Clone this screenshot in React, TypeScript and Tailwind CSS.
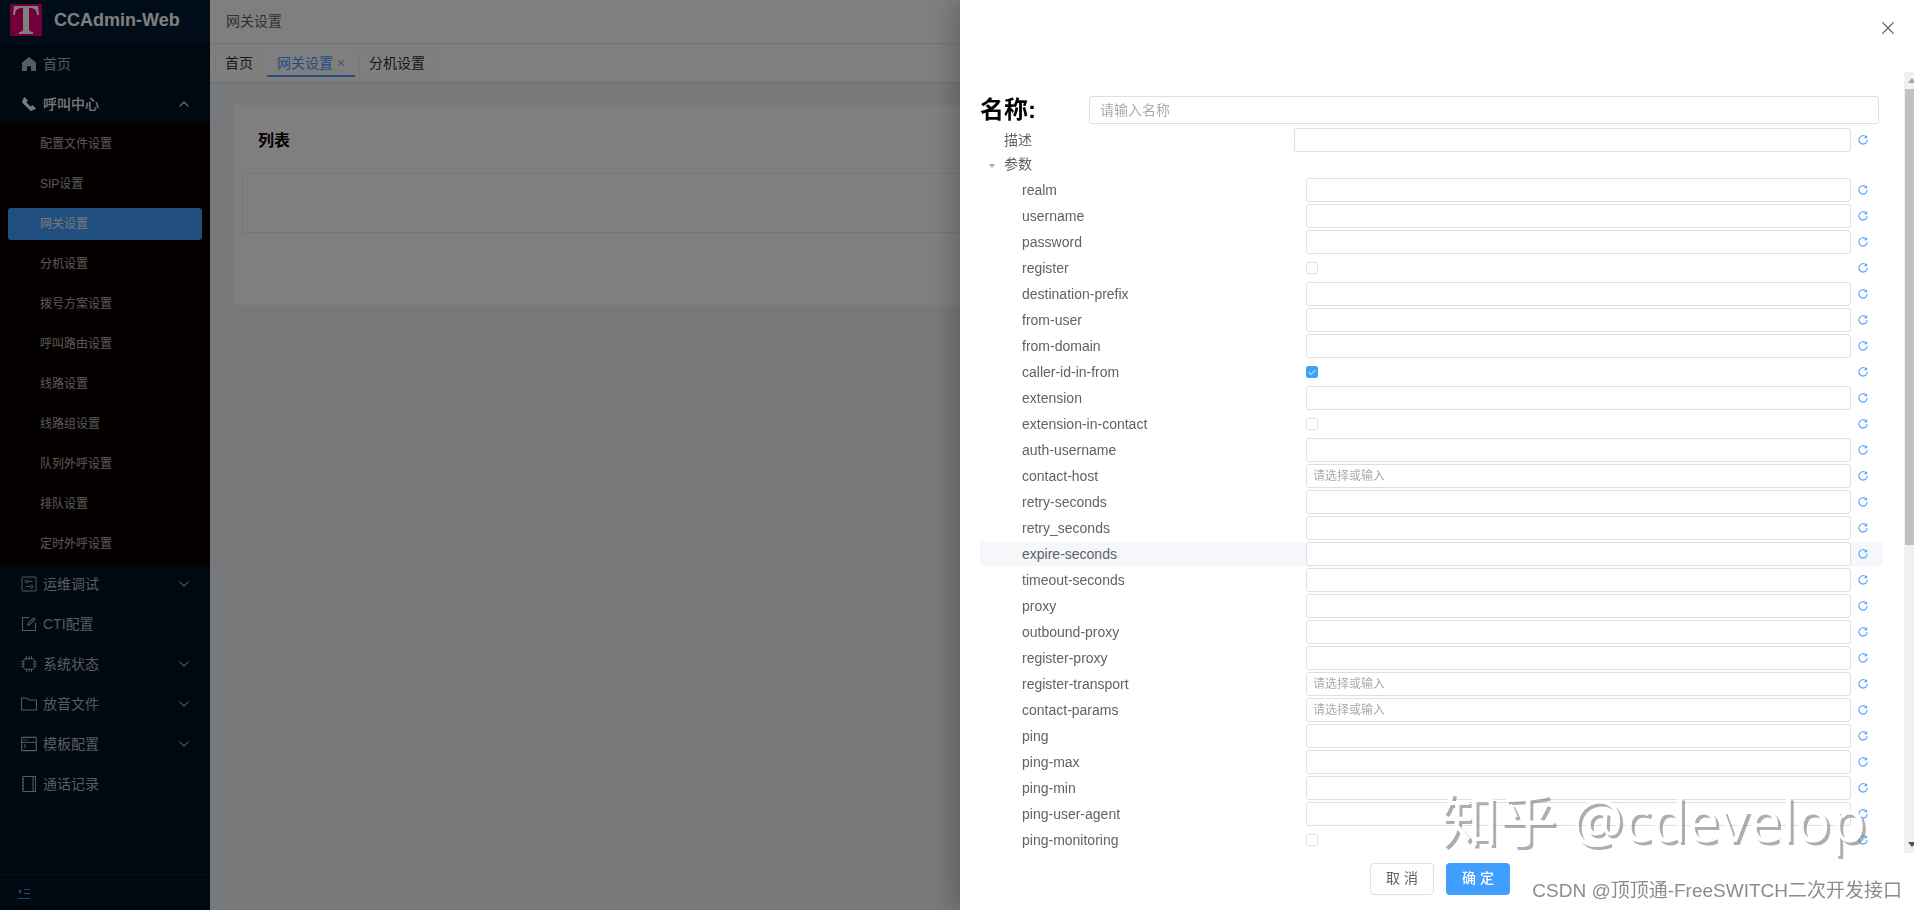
import { useState } from "react";
import type { ReactNode } from "react";
import clsx from "clsx";

type Field = {
  name: string;
  kind?: "text" | "check" | "select";
  checked?: boolean;
};

const SUB_MENU = [
  "配置文件设置",
  "SIP设置",
  "网关设置",
  "分机设置",
  "拨号方案设置",
  "呼叫路由设置",
  "线路设置",
  "线路组设置",
  "队列外呼设置",
  "排队设置",
  "定时外呼设置",
];

const FIELDS: Field[] = [
  { name: "realm" },
  { name: "username" },
  { name: "password" },
  { name: "register", kind: "check" },
  { name: "destination-prefix" },
  { name: "from-user" },
  { name: "from-domain" },
  { name: "caller-id-in-from", kind: "check", checked: true },
  { name: "extension" },
  { name: "extension-in-contact", kind: "check" },
  { name: "auth-username" },
  { name: "contact-host", kind: "select" },
  { name: "retry-seconds" },
  { name: "retry_seconds" },
  { name: "expire-seconds" },
  { name: "timeout-seconds" },
  { name: "proxy" },
  { name: "outbound-proxy" },
  { name: "register-proxy" },
  { name: "register-transport", kind: "select" },
  { name: "contact-params", kind: "select" },
  { name: "ping" },
  { name: "ping-max" },
  { name: "ping-min" },
  { name: "ping-user-agent" },
  { name: "ping-monitoring", kind: "check" },
];

function Icon({ className, children }: { className?: string; children: ReactNode }) {
  return (
    <svg viewBox="0 0 1024 1024" fill="currentColor" aria-hidden="true" className={clsx("shrink-0", className)}>
      {children}
    </svg>
  );
}

const HomeIcon = () => (
  <Icon className="size-4">
    <path d="M512 64 64 420v540h320V680q0-32 32-32h192q32 0 32 32v280h320V420z" />
  </Icon>
);

const PhoneIcon = () => (
  <Icon className="size-4">
    <path
      stroke="currentColor"
      strokeWidth="50"
      d="M199.232 125.568 90.624 379.008a32 32 0 0 0 6.784 35.2l512.384 512.384a32 32 0 0 0 35.2 6.784l253.44-108.608a32 32 0 0 0 10.048-52.032L769.6 633.92a32 32 0 0 0-36.928-5.952l-130.176 65.088-271.488-271.552 65.024-130.176a32 32 0 0 0-5.952-36.928L251.2 115.52a32 32 0 0 0-51.968 10.048z"
    />
  </Icon>
);

const SetUpIcon = () => (
  <Icon className="size-4">
    <g fill="none" stroke="currentColor" strokeWidth="60">
      <rect x="64" y="64" width="896" height="896" rx="20" />
      <circle cx="350" cy="350" r="90" />
      <path d="M440 350h300M290 680h280" />
      <circle cx="670" cy="680" r="90" />
    </g>
  </Icon>
);

const EditIcon = () => (
  <Icon className="size-4">
    <path d="M896 448a32 32 0 1 1 64 0v480a32 32 0 0 1-32 32H96a32 32 0 0 1-32-32V96a32 32 0 0 1 32-32h416a32 32 0 0 1 0 64H128v768h768z" />
    <path d="m469.952 554.24 52.8-7.552L847.104 222.4a32 32 0 1 0-45.248-45.248L477.44 501.44l-7.552 52.8zm422.4-422.4a96 96 0 0 1 0 135.808l-331.84 331.84a32 32 0 0 1-18.112 9.088L436.8 623.68a32 32 0 0 1-36.224-36.224l15.104-105.6a32 32 0 0 1 9.024-18.112l331.904-331.84a96 96 0 0 1 135.744 0z" />
  </Icon>
);

const CpuIcon = () => (
  <Icon className="size-4">
    <g fill="none" stroke="currentColor" strokeWidth="64" strokeLinecap="round">
      <rect x="180" y="180" width="664" height="664" rx="110" />
      <path d="M352 40v120M512 40v120M672 40v120M352 864v120M512 864v120M672 864v120" />
      <path d="M40 352h120M40 512h120M40 672h120M864 352h120M864 512h120M864 672h120" />
    </g>
  </Icon>
);

const FolderIcon = () => (
  <Icon className="size-4">
    <path d="M64 160v704h896V288H485.76L357.504 160zM32 96h351.872l128.384 128H992a32 32 0 0 1 32 32v640a32 32 0 0 1-32 32H32a32 32 0 0 1-32-32V128a32 32 0 0 1 32-32z" />
  </Icon>
);

const TemplateIcon = () => (
  <Icon className="size-4">
    <g fill="none" stroke="currentColor" strokeWidth="70">
      <rect x="50" y="90" width="924" height="844" rx="30" />
      <path d="M50 400h924M260 510v280M170 245h70M320 245h70" />
    </g>
  </Icon>
);

const NotebookIcon = () => (
  <Icon className="size-4">
    <path d="M160 64v896h736V64zm-32-64h800a32 32 0 0 1 32 32v960a32 32 0 0 1-32 32H128a32 32 0 0 1-32-32V32a32 32 0 0 1 32-32z" />
    <path d="M736 32h64v960h-64zM64 192h128v64H64zm0 192h128v64H64zm0 192h128v64H64zm0 192h128v64H64z" />
  </Icon>
);

const ChevronIcon = ({ up }: { up?: boolean }) => (
  <Icon className={clsx("size-3", up && "rotate-180")}>
    <path d="M832 300 512 620 192 300a45 45 0 0 0-64 64l352 352a45 45 0 0 0 64 0l352-352a45 45 0 0 0-64-64z" />
  </Icon>
);

const CloseIcon = ({ className }: { className?: string }) => (
  <Icon className={className}>
    <path d="M764.288 214.592 512 466.88 259.712 214.592a31.936 31.936 0 0 0-45.12 45.12L466.752 512 214.528 764.224a31.936 31.936 0 1 0 45.12 45.184L512 557.184l252.288 252.288a31.936 31.936 0 0 0 45.12-45.12L557.12 512.064l252.288-252.352a31.936 31.936 0 1 0-45.12-45.184z" />
  </Icon>
);

const MENU = [
  { label: "运维调试", icon: <SetUpIcon />, open: true },
  { label: "CTI配置", icon: <EditIcon />, open: false },
  { label: "系统状态", icon: <CpuIcon />, open: true },
  { label: "放音文件", icon: <FolderIcon />, open: true },
  { label: "模板配置", icon: <TemplateIcon />, open: true },
  { label: "通话记录", icon: <NotebookIcon />, open: false },
];

function Sidebar() {
  return (
    <aside className="flex w-[210px] shrink-0 flex-col bg-[#001020] text-sm text-[#b0b8c2]">
      <div className="flex h-11 items-center gap-3 bg-[#001a33] px-[10px] pb-1">
        <svg viewBox="0 0 32 32" aria-hidden="true" className="size-8 shrink-0">
          <rect width="32" height="32" fill="#e20074" />
          <path
            fill="#fff"
            d="M4 2h24l1 9h-2c0-5-3-7-6-7h-2v21c0 2 1 3 4 3v2H9v-2c3 0 4-1 4-3V4h-2c-3 0-6 2-6 7H3z"
          />
        </svg>
        <h1 className="text-lg font-bold text-white">CCAdmin-Web</h1>
      </div>

      <nav>
        <a href="#home" className="flex h-10 items-center gap-[6px] px-[21px]">
          <HomeIcon />
          首页
        </a>
        <a href="#call" className="flex h-10 items-center gap-[6px] px-5 pl-[21px] font-medium text-[#f4f4f5]">
          <PhoneIcon />
          <span className="flex-1">呼叫中心</span>
          <ChevronIcon up />
        </a>
        <ul className="bg-[#0a0000] text-xs text-[#b4b4b4]">
          {SUB_MENU.map((item) => (
            <li key={item} className="flex h-10 items-center px-2">
              <a
                href="#sub"
                className={clsx(
                  "flex h-8 flex-1 items-center rounded-[3px] px-8",
                  item === "网关设置" && "bg-[#409eff] text-[#f4f4f5]"
                )}
              >
                {item}
              </a>
            </li>
          ))}
        </ul>
        {MENU.map((item) => (
          <a key={item.label} href="#menu" className="flex h-10 items-center gap-[6px] px-5 pl-[21px]">
            {item.icon}
            <span className="flex-1">{item.label}</span>
            {item.open && <ChevronIcon />}
          </a>
        ))}
      </nav>

      <div className="mt-auto flex h-9 items-center border-t border-[#0b2036] px-4">
        <button type="button" aria-label="折叠菜单" className="text-[#4a86d8]">
          <svg viewBox="0 0 16 14" fill="none" stroke="currentColor" className="h-[14px] w-4">
            <path d="M8 3.500h6M8 7.500h6M2 12.500h12" />
            <path d="M5 3v5L2 5.500z" fill="currentColor" stroke="none" />
          </svg>
        </button>
      </div>
    </aside>
  );
}

function Page() {
  return (
    <div className="flex min-w-0 flex-1 flex-col bg-[#f0f2f5] text-sm">
      <header className="flex h-11 shrink-0 items-center border-b border-[#e4e7ed] bg-white px-4 pb-[2px] text-[#606266]">
        网关设置
      </header>
      <div className="flex h-[39px] shrink-0 items-center gap-1 border-b border-[#d8dce5] bg-white px-[5px] text-[#303133]">
        <a href="#home" className="flex h-7 items-center border border-[#f5f5f5] px-[9px]">
          首页
        </a>
        <div className="flex h-7 items-center gap-1 border-b-2 border-[#409eff] px-[10px] pt-[2px] text-[#409eff]">
          <a href="#gateway">网关设置</a>
          <button type="button" aria-label="关闭标签">
            <CloseIcon className="size-2 stroke-current stroke-[80px]" />
          </button>
        </div>
        <a href="#extension" className="flex h-7 items-center border border-[#f5f5f5] px-[9px]">
          分机设置
        </a>
      </div>
      <main className="p-6 pt-[22px]">
        <section className="flex h-[200px] flex-col bg-white px-2 pt-6">
          <h2 className="px-4 text-base font-bold text-black">列表</h2>
          <div className="mt-5 h-[60px] border border-[#ebeef5]" />
        </section>
      </main>
    </div>
  );
}

function ResetButton({ name }: { name: string }) {
  return (
    <button type="button" aria-label={`重置 ${name}`} className="ml-[6px] text-[#409eff]">
      <Icon className="size-3 stroke-current stroke-[20px]">
        <path d="M784.512 230.272v-50.56a32 32 0 1 1 64 0v149.056a32 32 0 0 1-32 32H667.52a32 32 0 1 1 0-64h92.992A320 320 0 1 0 832 512h64a384 384 0 0 1-384 384 384 384 0 0 1-384-384 384 384 0 0 1 656.512-281.728z" />
      </Icon>
    </button>
  );
}

const INPUT =
  "w-full min-w-0 rounded-[3px] border border-[#dcdfe6] bg-white outline-none placeholder:text-[#a8abb2] focus:border-[#409eff]";

function FieldRow({ field, active }: { field: Field; active: boolean }) {
  const { name, kind = "text" } = field;
  const [checked, setChecked] = useState(Boolean(field.checked));

  return (
    <div className={clsx("flex h-6 items-center pl-[42px] pr-[14px] hover:bg-[#f5f7fa]", active && "bg-[#f5f7fa]")}>
      <label htmlFor={name} className="w-[284px] shrink-0">
        {name}
      </label>
      <div className="flex h-6 flex-1 items-center">
        {kind === "check" ? (
          <span className="grid size-3">
            <input
              id={name}
              type="checkbox"
              checked={checked}
              onChange={(e) => setChecked(e.target.checked)}
              className="col-start-1 row-start-1 size-3 appearance-none rounded-[2px] border border-[#dcdfe6] bg-white checked:border-[#409eff] checked:bg-[#409eff]"
            />
            {checked && (
              <svg viewBox="0 0 12 12" fill="none" stroke="#fff" className="pointer-events-none col-start-1 row-start-1">
                <path d="m3 6 2 2.500 4.500-4.500" />
              </svg>
            )}
          </span>
        ) : (
          <input
            id={name}
            type="text"
            placeholder={kind === "select" ? "请选择或输入" : undefined}
            className={clsx(INPUT, "h-6 px-[6px] text-xs")}
          />
        )}
      </div>
      <ResetButton name={name} />
    </div>
  );
}

/* Classic scrollbar: its outer side runs past the window edge */
function ScrollBar() {
  return (
    <div aria-hidden="true" className="w-[10px] shrink-0 overflow-hidden bg-[#f1f1f1]">
      <div className="flex h-full w-4 flex-col items-center">
        <svg viewBox="0 0 8 17" className="h-[17px] w-2 shrink-0" fill="#a3a3a3">
          <path d="M0 11h8L4 6z" />
        </svg>
        <div className="ml-[2px] w-full flex-[456] bg-[#c1c1c1]" />
        <div className="flex-[291]" />
        <svg viewBox="0 0 8 17" className="h-[17px] w-2 shrink-0" fill="#505050">
          <path d="M0 6h8l-4 5z" />
        </svg>
      </div>
    </div>
  );
}

function Drawer() {
  return (
    <div className="fixed inset-0 flex justify-end bg-black/50">
      <div
        role="dialog"
        aria-label="网关设置"
        className="flex w-[calc(50%-3px)] flex-col bg-white text-sm text-[#606266] shadow-[-8px_0_24px_rgba(0,0,0,0.2)]"
      >
        <div className="flex h-[72px] shrink-0 items-start justify-end px-4 pt-[18px]">
          <button type="button" aria-label="关闭" className="text-[#606266]">
            <CloseIcon className="size-5" />
          </button>
        </div>

        <div className="flex min-h-0 flex-1">
          <div className="min-w-0 flex-1 overflow-hidden pl-5 pr-[21px] pt-6">
            <div className="flex h-7 items-center pr-1">
              <label htmlFor="gateway-name" className="w-[109px] shrink-0 text-2xl font-bold text-black">
                名称:
              </label>
              <input
                id="gateway-name"
                type="text"
                placeholder="请输入名称"
                className={clsx(INPUT, "h-7 px-[10px] text-sm")}
              />
            </div>

            <div className="mt-1 flex h-6 items-center pl-6 pr-[14px]">
              <label htmlFor="description" className="w-[290px] shrink-0">
                描述
              </label>
              <input id="description" type="text" className={clsx(INPUT, "h-6 px-[6px] text-xs")} />
              <ResetButton name="描述" />
            </div>
            <div className="flex h-6 items-center gap-2 pl-2">
              <svg viewBox="0 0 8 8" fill="#a8abb2" aria-hidden="true" className="size-2">
                <path d="M1 4h6L4 8z" />
              </svg>
              参数
            </div>

            <div className="flex flex-col gap-[2px] pt-[2px]">
              {FIELDS.map((field) => (
                <FieldRow key={field.name} field={field} active={field.name === "expire-seconds"} />
              ))}
            </div>
          </div>
          <ScrollBar />
        </div>

        <div className="flex h-[57px] shrink-0 justify-center gap-3 pl-[6px] pt-[10px]">
          <button type="button" className="h-8 w-16 rounded border border-[#dcdfe6] bg-white pb-[2px]">
            取 消
          </button>
          <button type="button" className="h-8 w-16 rounded bg-[#409eff] pb-[2px] font-medium text-white">
            确 定
          </button>
        </div>
      </div>
    </div>
  );
}

function Watermarks() {
  return (
    <div className="pointer-events-none fixed bottom-0 right-0 flex flex-col items-end gap-4 whitespace-nowrap pb-1">
      <p className="mr-12 font-['Open_Sans','Noto_Sans_CJK_SC',sans-serif] text-[58px] leading-[80px] text-white [text-shadow:3px_3px_0_rgba(120,120,120,0.6)]">
        知乎 @cdevelop
      </p>
      <p className="mr-3 text-[19px] leading-[30px] text-[#8c8c8c]">CSDN @顶顶通-FreeSWITCH二次开发接口</p>
    </div>
  );
}

export default function App() {
  return (
    <div className="flex h-screen overflow-hidden font-['Liberation_Sans','Noto_Sans_CJK_SC',sans-serif]">
      <Sidebar />
      <Page />
      <Drawer />
      <Watermarks />
    </div>
  );
}
